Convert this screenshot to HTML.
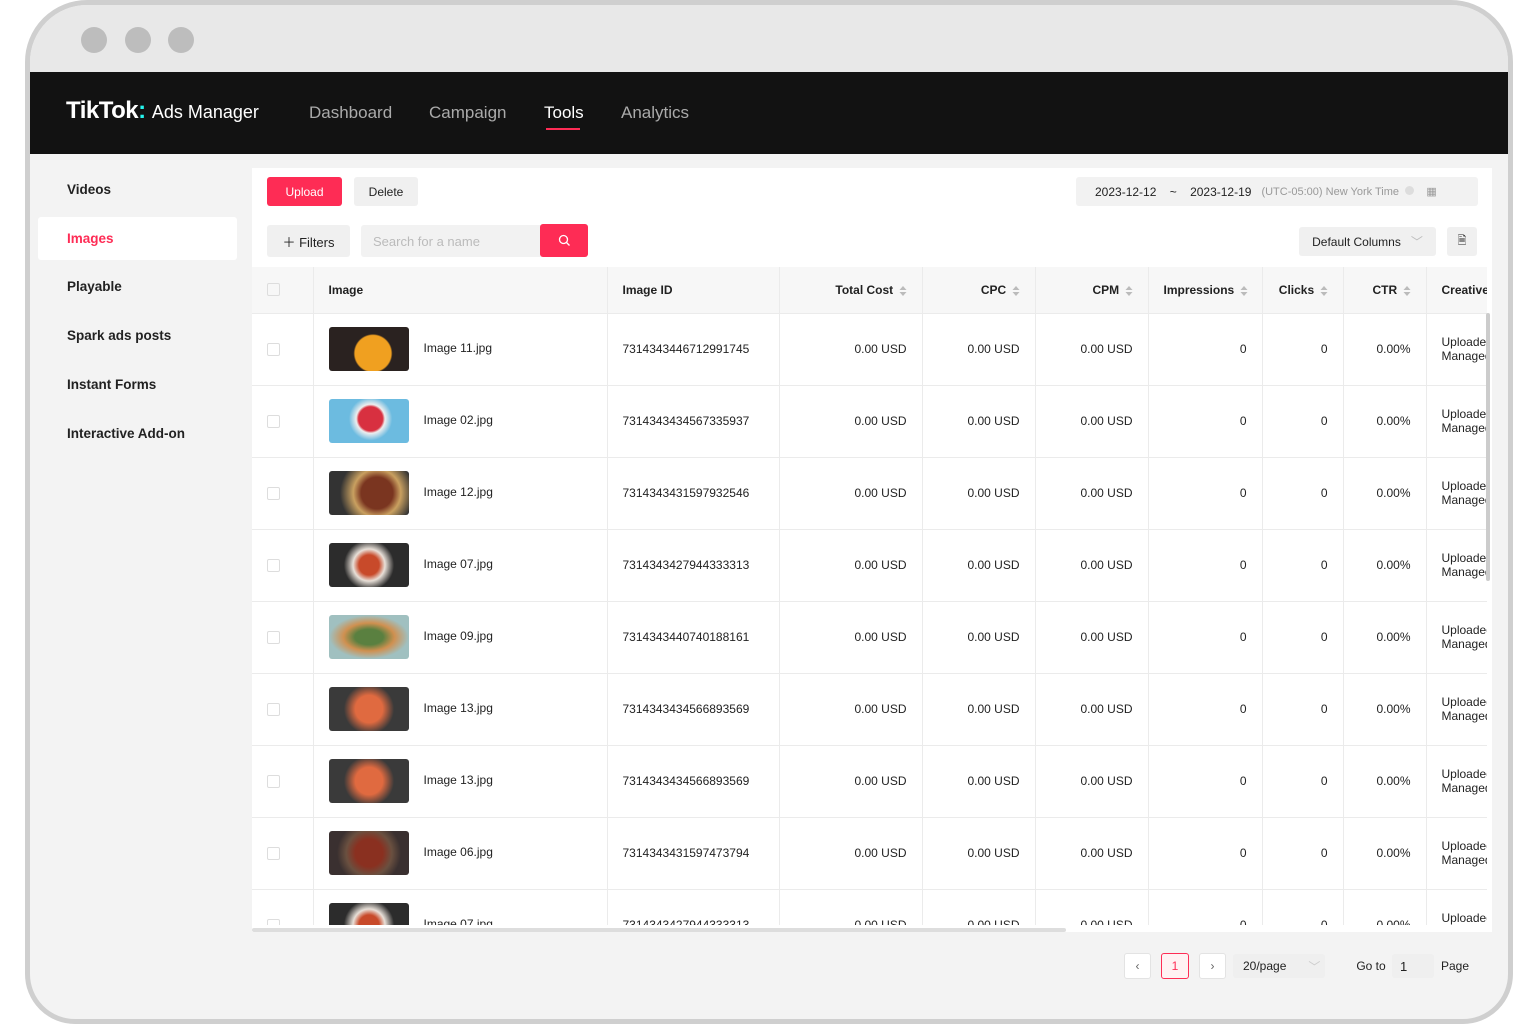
<!DOCTYPE html>
<html><head><meta charset="utf-8"><style>
*{box-sizing:border-box;margin:0;padding:0}
body{width:1536px;height:1024px;background:#fff;font-family:"Liberation Sans",Arial,sans-serif;position:relative;overflow:hidden;color:#222}
.frame{position:absolute;left:25px;top:0;width:1488px;height:1024px;border:5px solid #cfcfcf;border-radius:62px 62px 50px 50px;background:#f3f3f3;overflow:hidden}
.title{position:absolute;left:0;top:0;width:100%;height:67px;background:#e8e8e8}
.dot{position:absolute;top:22px;width:26px;height:26px;border-radius:50%;background:#bdbdbd}
.nav{position:absolute;left:0;top:67px;width:100%;height:82px;background:#121212}
.logo{position:absolute;left:36px;top:25px;color:#fff;font-weight:bold;font-size:24px;letter-spacing:-0.5px}
.logo span{font-weight:normal;font-size:18px;letter-spacing:0}
.ni{position:absolute;top:31px;font-size:17px;color:#aaa}
.side{position:absolute;left:37px;font-size:13.5px;font-weight:bold;color:#222}
.panel{position:absolute;background:#fff}
.btn{position:absolute;font-size:12px;display:flex;align-items:center;justify-content:center;border-radius:3px}
.tw{position:absolute;left:252px;top:267px;width:1235px;height:658px;overflow:hidden;background:#fff}
table{border-collapse:collapse;table-layout:fixed;width:1290px;font-size:12px;color:#222}
td,th{border-right:1px solid #ebebeb;border-bottom:1px solid #ebebeb;height:72px;padding:0 15px;white-space:nowrap;overflow:hidden}
th{height:46px;background:#f7f7f7;font-weight:bold;text-align:left}
.r{text-align:right}
.cb{width:13px;height:13px;border:1px solid #ddd;border-radius:2px;margin-left:0}
.th{display:inline-block;width:80px;height:44px;border-radius:3px;vertical-align:middle;margin-right:15px}
.s{display:inline-block;vertical-align:middle;margin-left:2px}
</style></head><body>
<svg width="0" height="0" style="position:absolute"><defs><symbol id="so" viewBox="0 0 8 12"><path d="M4 1L7.5 5H0.5z" fill="#bbb"/><path d="M4 11L7.5 7H0.5z" fill="#bbb"/></symbol></defs></svg>
<div class="frame">
<div class="title">
<div class="dot" style="left:51px"></div><div class="dot" style="left:95px"></div><div class="dot" style="left:138px"></div>
</div>
<div class="nav">
<div class="logo">TikTok<b style="color:#25f4ee">:</b> <span>Ads Manager</span></div>
<div class="ni" style="left:279px">Dashboard</div>
<div class="ni" style="left:399px">Campaign</div>
<div class="ni" style="left:514px;color:#fff">Tools</div>
<div style="position:absolute;left:516px;top:56px;width:34px;height:2px;background:#fe2c55"></div>
<div class="ni" style="left:591px">Analytics</div>
</div>
<div class="side" style="top:177px">Videos</div>
<div style="position:absolute;left:8px;top:212px;width:199px;height:43px;background:#fff;border-radius:3px"></div>
<div class="side" style="top:226px;color:#fe2c55">Images</div>
<div class="side" style="top:274px">Playable</div>
<div class="side" style="top:323px">Spark ads posts</div>
<div class="side" style="top:372px">Instant Forms</div>
<div class="side" style="top:421px">Interactive Add-on</div>
<div class="panel" style="left:222px;top:163px;width:1240px;height:764px"></div>
<div class="btn" style="left:237px;top:172px;width:75px;height:29px;background:#fe2c55;color:#fff">Upload</div>
<div class="btn" style="left:324px;top:172px;width:64px;height:29px;background:#f0f0f0">Delete</div>
<div class="btn" style="left:1046px;top:172px;width:402px;height:29px;background:#f2f2f2;justify-content:flex-start;padding-left:19px;font-size:12px">2023-12-12 &nbsp;&nbsp; ~ &nbsp;&nbsp; 2023-12-19 &nbsp;&nbsp;<span style="color:#999;font-size:11px">(UTC-05:00) New York Time &nbsp;<span style="display:inline-block;width:9px;height:9px;border-radius:50%;background:#ddd"></span> &nbsp;&nbsp; ▦</span></div>
<div class="btn" style="left:237px;top:220px;width:83px;height:32px;background:#f0f0f0;font-size:13px">＋ Filters</div>
<div class="btn" style="left:331px;top:220px;width:180px;height:32px;background:#f2f2f2;color:#bbb;font-size:13px;justify-content:flex-start;padding-left:12px;border-radius:3px 0 0 3px">Search for a name</div>
<div class="btn" style="left:510px;top:219px;width:48px;height:33px;background:#fe2c55"><svg width="13" height="13" viewBox="0 0 13 13"><circle cx="5.5" cy="5.5" r="4" fill="none" stroke="#fff" stroke-width="1.3"/><path d="M8.5 8.5L11.5 11.5" stroke="#fff" stroke-width="1.3"/></svg></div>
<div class="btn" style="left:1269px;top:222px;width:137px;height:29px;background:#f0f0f0;font-size:12px">Default Columns &nbsp;&nbsp;<span style="color:#bbb">﹀</span></div>
<div class="btn" style="left:1417px;top:222px;width:30px;height:29px;background:#f0f0f0;font-size:11px">🗎</div>
<div style="position:absolute;left:222px;top:923px;width:814px;height:4px;background:#ddd;border-radius:2px"></div>
<div style="position:absolute;left:1456px;top:308px;width:4px;height:268px;background:#ccc;border-radius:2px;z-index:2"></div>
<div class="btn" style="left:1094px;top:948px;width:27px;height:26px;background:#fff;border:1px solid #e3e3e3;color:#666">‹</div>
<div class="btn" style="left:1131px;top:948px;width:28px;height:26px;background:#fff1f3;border:1px solid #fe2c55;color:#fe2c55">1</div>
<div class="btn" style="left:1169px;top:948px;width:27px;height:26px;background:#fff;border:1px solid #e3e3e3;color:#666">›</div>
<div class="btn" style="left:1203px;top:949px;width:92px;height:24px;background:#efefef;justify-content:flex-start;padding-left:10px">20/page <span style="color:#ccc;margin-left:22px">﹀</span></div>
<div class="btn" style="left:1324px;top:949px;width:34px;height:24px">Go to</div>
<div class="btn" style="left:1362px;top:949px;width:42px;height:24px;background:#efefef;font-size:13px;justify-content:flex-start;padding-left:8px">1</div>
<div class="btn" style="left:1408px;top:949px;width:34px;height:24px">Page</div>
</div>
<div class="tw"><table>
<colgroup><col style="width:61px"><col style="width:294px"><col style="width:172px"><col style="width:143px"><col style="width:113px"><col style="width:113px"><col style="width:114px"><col style="width:81px"><col style="width:83px"><col style="width:116px"></colgroup>
<tr><th><div class="cb"></div></th><th>Image</th><th>Image ID</th><th class="r">Total Cost <svg class="s" width="8" height="12"><use href="#so"/></svg></th><th class="r">CPC <svg class="s" width="8" height="12"><use href="#so"/></svg></th><th class="r">CPM <svg class="s" width="8" height="12"><use href="#so"/></svg></th><th class="r">Impressions <svg class="s" width="8" height="12"><use href="#so"/></svg></th><th class="r">Clicks <svg class="s" width="8" height="12"><use href="#so"/></svg></th><th class="r">CTR <svg class="s" width="8" height="12"><use href="#so"/></svg></th><th>Creative Status</th></tr>
<tr><td><div class="cb"></div></td><td><span class="th" style="background:radial-gradient(circle at 55% 60%,#f0a020 0 35%,#2a2220 38%)"></span>Image 11.jpg</td><td>7314343446712991745</td><td class="r">0.00 USD</td><td class="r">0.00 USD</td><td class="r">0.00 USD</td><td class="r">0</td><td class="r">0</td><td class="r">0.00%</td><td style="line-height:14px">Uploaded<br>Managed</td></tr>
<tr><td><div class="cb"></div></td><td><span class="th" style="background:radial-gradient(circle at 52% 45%,#d83040 0 25%,#eee 30%,#6cbbe0 45%)"></span>Image 02.jpg</td><td>7314343434567335937</td><td class="r">0.00 USD</td><td class="r">0.00 USD</td><td class="r">0.00 USD</td><td class="r">0</td><td class="r">0</td><td class="r">0.00%</td><td style="line-height:14px">Uploaded<br>Managed</td></tr>
<tr><td><div class="cb"></div></td><td><span class="th" style="background:radial-gradient(circle at 60% 50%,#7a3520 0 30%,#c9a060 45%,#333 70%)"></span>Image 12.jpg</td><td>7314343431597932546</td><td class="r">0.00 USD</td><td class="r">0.00 USD</td><td class="r">0.00 USD</td><td class="r">0</td><td class="r">0</td><td class="r">0.00%</td><td style="line-height:14px">Uploaded<br>Managed</td></tr>
<tr><td><div class="cb"></div></td><td><span class="th" style="background:radial-gradient(circle at 50% 50%,#c84a2a 0 22%,#e8e0d8 35%,#2c2c2c 55%)"></span>Image 07.jpg</td><td>7314343427944333313</td><td class="r">0.00 USD</td><td class="r">0.00 USD</td><td class="r">0.00 USD</td><td class="r">0</td><td class="r">0</td><td class="r">0.00%</td><td style="line-height:14px">Uploaded<br>Managed</td></tr>
<tr><td><div class="cb"></div></td><td><span class="th" style="background:radial-gradient(ellipse at 50% 50%,#5a8040 0 25%,#d09050 45%,#a0c0c0 70%)"></span>Image 09.jpg</td><td>7314343440740188161</td><td class="r">0.00 USD</td><td class="r">0.00 USD</td><td class="r">0.00 USD</td><td class="r">0</td><td class="r">0</td><td class="r">0.00%</td><td style="line-height:14px">Uploaded<br>Managed</td></tr>
<tr><td><div class="cb"></div></td><td><span class="th" style="background:radial-gradient(circle at 50% 50%,#e06a40 0 30%,#3a3a3a 55%)"></span>Image 13.jpg</td><td>7314343434566893569</td><td class="r">0.00 USD</td><td class="r">0.00 USD</td><td class="r">0.00 USD</td><td class="r">0</td><td class="r">0</td><td class="r">0.00%</td><td style="line-height:14px">Uploaded<br>Managed</td></tr>
<tr><td><div class="cb"></div></td><td><span class="th" style="background:radial-gradient(circle at 50% 50%,#e06a40 0 30%,#3a3a3a 55%)"></span>Image 13.jpg</td><td>7314343434566893569</td><td class="r">0.00 USD</td><td class="r">0.00 USD</td><td class="r">0.00 USD</td><td class="r">0</td><td class="r">0</td><td class="r">0.00%</td><td style="line-height:14px">Uploaded<br>Managed</td></tr>
<tr><td><div class="cb"></div></td><td><span class="th" style="background:radial-gradient(circle at 50% 50%,#8a3020 0 30%,#6a5040 50%,#3a3030 70%)"></span>Image 06.jpg</td><td>7314343431597473794</td><td class="r">0.00 USD</td><td class="r">0.00 USD</td><td class="r">0.00 USD</td><td class="r">0</td><td class="r">0</td><td class="r">0.00%</td><td style="line-height:14px">Uploaded<br>Managed</td></tr>
<tr><td><div class="cb"></div></td><td><span class="th" style="background:radial-gradient(circle at 50% 50%,#c84a2a 0 22%,#e8e0d8 35%,#2c2c2c 55%)"></span>Image 07.jpg</td><td>7314343427944333313</td><td class="r">0.00 USD</td><td class="r">0.00 USD</td><td class="r">0.00 USD</td><td class="r">0</td><td class="r">0</td><td class="r">0.00%</td><td style="line-height:14px">Uploaded<br>Managed</td></tr>
</table></div>
</body></html>
